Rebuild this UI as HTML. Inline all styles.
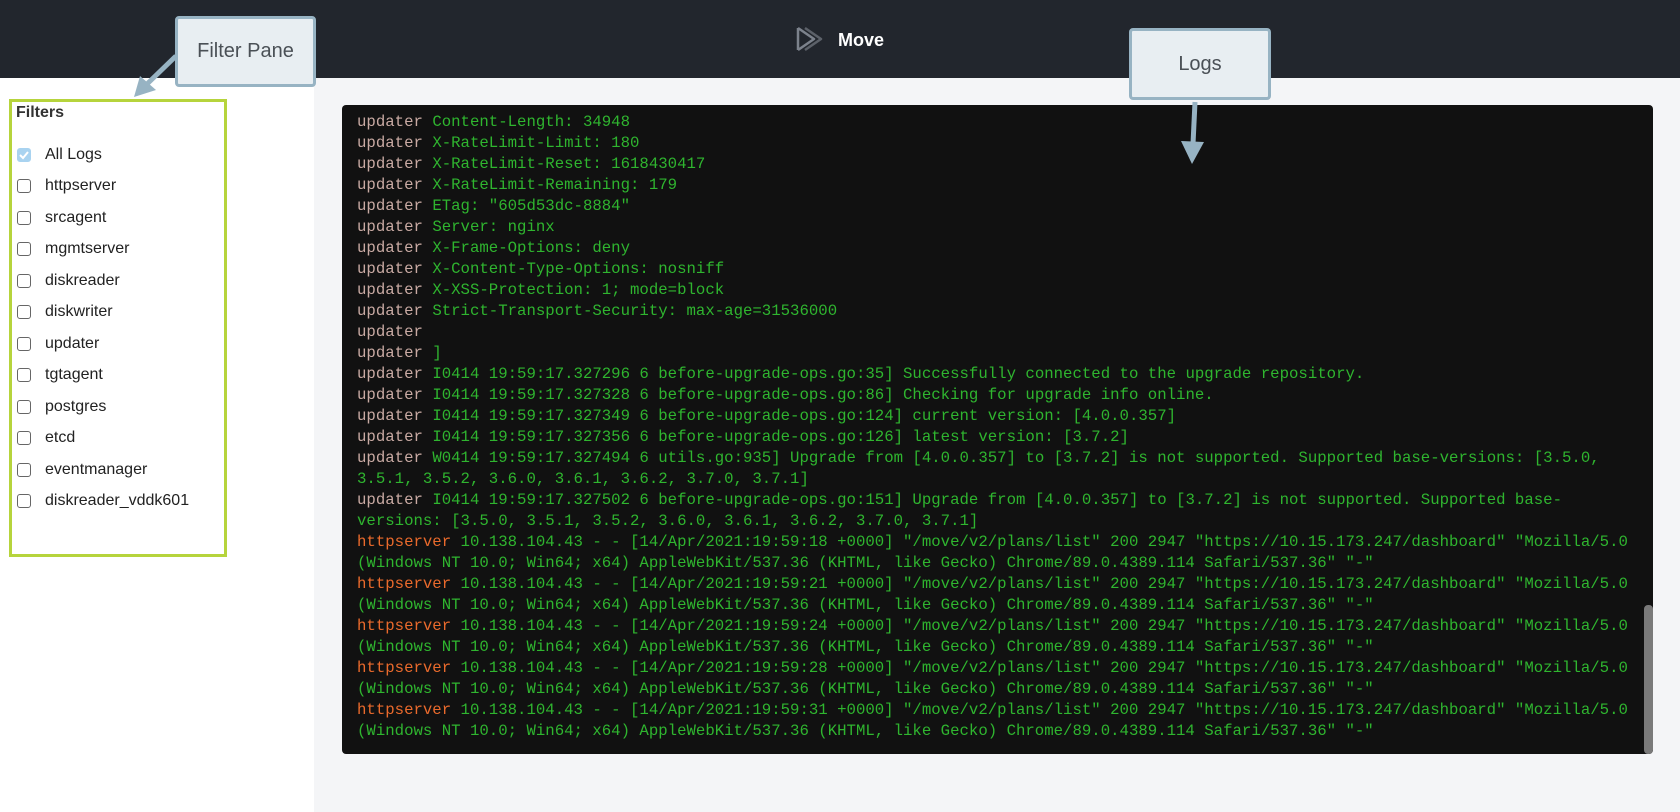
<!DOCTYPE html>
<html><head><meta charset="utf-8"><style>
*{margin:0;padding:0;box-sizing:border-box}
body{width:1680px;height:812px;overflow:hidden;background:#f4f5f7;font-family:"Liberation Sans",sans-serif;position:relative}
.hdr{position:absolute;left:0;top:0;width:1680px;height:78px;background:#22262d}
.left{position:absolute;left:0;top:78px;width:314px;height:734px;background:#fff}
.gbox{position:absolute;left:9px;top:99px;width:218px;height:458px;border:3px solid #b6d43c}
.ft{position:absolute;left:16px;top:104px;font-size:16px;font-weight:bold;color:#333}
.cb{position:absolute;left:17px;width:14px;height:14px;border:1px solid #666;border-radius:3px;background:#fff}
.cl{position:absolute;left:45px;font-size:16px;color:#222}
.log{position:absolute;left:342px;top:105px;width:1311px;height:649px;background:#111;border-radius:4px;overflow:hidden}
.lines{position:absolute;left:15px;top:6.5px;font-family:"Liberation Mono",monospace;font-size:15.7px;line-height:21px;color:#2fb52f;white-space:pre}
.u{color:#c9aaa3}.h{color:#ea6a2c}
.sb{position:absolute;right:0;top:500px;width:9px;height:149px;background:#7a7a7a;border-radius:4px}
.call{position:absolute;background:#e8eef2;border:3px solid #97b3c3;border-radius:4px;color:#4a5056;font-size:20px;display:flex;align-items:center;justify-content:center}
</style></head><body>
<div class="hdr"></div>
<svg style="position:absolute;left:794px;top:24px" width="34" height="30" viewBox="0 0 34 30"><path d="M4 4 V26 M4 4 L20 15 L4 26" fill="none" stroke="#7c828c" stroke-width="2.5" stroke-linejoin="round"/><path d="M11 4 L27 15 L11 26" fill="none" stroke="#5c6169" stroke-width="2.5" stroke-linejoin="round"/></svg>
<div style="position:absolute;left:838px;top:30px;color:#fff;font-weight:bold;font-size:18px">Move</div>
<div class="left"></div>
<div class="gbox"></div>
<div class="ft">Filters</div>
<div class="cb" style="top:148px;background:#a9d3f0;border-color:#a9d3f0"><svg width="12" height="12" style="position:absolute;left:0;top:0"><path d="M2 6 L5 9 L10 3" fill="none" stroke="#fff" stroke-width="2"/></svg></div><div class="cl" style="top:146px">All Logs</div>
<div class="cb" style="top:179px"></div><div class="cl" style="top:177px">httpserver</div>
<div class="cb" style="top:211px"></div><div class="cl" style="top:209px">srcagent</div>
<div class="cb" style="top:242px"></div><div class="cl" style="top:240px">mgmtserver</div>
<div class="cb" style="top:274px"></div><div class="cl" style="top:272px">diskreader</div>
<div class="cb" style="top:305px"></div><div class="cl" style="top:303px">diskwriter</div>
<div class="cb" style="top:337px"></div><div class="cl" style="top:335px">updater</div>
<div class="cb" style="top:368px"></div><div class="cl" style="top:366px">tgtagent</div>
<div class="cb" style="top:400px"></div><div class="cl" style="top:398px">postgres</div>
<div class="cb" style="top:431px"></div><div class="cl" style="top:429px">etcd</div>
<div class="cb" style="top:463px"></div><div class="cl" style="top:461px">eventmanager</div>
<div class="cb" style="top:494px"></div><div class="cl" style="top:492px">diskreader_vddk601</div>
<div class="log"><div class="lines"><span class="u">updater</span> Content-Length: 34948
<span class="u">updater</span> X-RateLimit-Limit: 180
<span class="u">updater</span> X-RateLimit-Reset: 1618430417
<span class="u">updater</span> X-RateLimit-Remaining: 179
<span class="u">updater</span> ETag: "605d53dc-8884"
<span class="u">updater</span> Server: nginx
<span class="u">updater</span> X-Frame-Options: deny
<span class="u">updater</span> X-Content-Type-Options: nosniff
<span class="u">updater</span> X-XSS-Protection: 1; mode=block
<span class="u">updater</span> Strict-Transport-Security: max-age=31536000
<span class="u">updater</span>
<span class="u">updater</span> ]
<span class="u">updater</span> I0414 19:59:17.327296 6 before-upgrade-ops.go:35] Successfully connected to the upgrade repository.
<span class="u">updater</span> I0414 19:59:17.327328 6 before-upgrade-ops.go:86] Checking for upgrade info online.
<span class="u">updater</span> I0414 19:59:17.327349 6 before-upgrade-ops.go:124] current version: [4.0.0.357]
<span class="u">updater</span> I0414 19:59:17.327356 6 before-upgrade-ops.go:126] latest version: [3.7.2]
<span class="u">updater</span> W0414 19:59:17.327494 6 utils.go:935] Upgrade from [4.0.0.357] to [3.7.2] is not supported. Supported base-versions: [3.5.0,
3.5.1, 3.5.2, 3.6.0, 3.6.1, 3.6.2, 3.7.0, 3.7.1]
<span class="u">updater</span> I0414 19:59:17.327502 6 before-upgrade-ops.go:151] Upgrade from [4.0.0.357] to [3.7.2] is not supported. Supported base-
versions: [3.5.0, 3.5.1, 3.5.2, 3.6.0, 3.6.1, 3.6.2, 3.7.0, 3.7.1]
<span class="h">httpserver</span> 10.138.104.43 - - [14/Apr/2021:19:59:18 +0000] "/move/v2/plans/list" 200 2947 "https://10.15.173.247/dashboard" "Mozilla/5.0
(Windows NT 10.0; Win64; x64) AppleWebKit/537.36 (KHTML, like Gecko) Chrome/89.0.4389.114 Safari/537.36" "-"
<span class="h">httpserver</span> 10.138.104.43 - - [14/Apr/2021:19:59:21 +0000] "/move/v2/plans/list" 200 2947 "https://10.15.173.247/dashboard" "Mozilla/5.0
(Windows NT 10.0; Win64; x64) AppleWebKit/537.36 (KHTML, like Gecko) Chrome/89.0.4389.114 Safari/537.36" "-"
<span class="h">httpserver</span> 10.138.104.43 - - [14/Apr/2021:19:59:24 +0000] "/move/v2/plans/list" 200 2947 "https://10.15.173.247/dashboard" "Mozilla/5.0
(Windows NT 10.0; Win64; x64) AppleWebKit/537.36 (KHTML, like Gecko) Chrome/89.0.4389.114 Safari/537.36" "-"
<span class="h">httpserver</span> 10.138.104.43 - - [14/Apr/2021:19:59:28 +0000] "/move/v2/plans/list" 200 2947 "https://10.15.173.247/dashboard" "Mozilla/5.0
(Windows NT 10.0; Win64; x64) AppleWebKit/537.36 (KHTML, like Gecko) Chrome/89.0.4389.114 Safari/537.36" "-"
<span class="h">httpserver</span> 10.138.104.43 - - [14/Apr/2021:19:59:31 +0000] "/move/v2/plans/list" 200 2947 "https://10.15.173.247/dashboard" "Mozilla/5.0
(Windows NT 10.0; Win64; x64) AppleWebKit/537.36 (KHTML, like Gecko) Chrome/89.0.4389.114 Safari/537.36" "-"</div><div class="sb"></div></div>
<div class="call" style="left:175px;top:16px;width:141px;height:71px">Filter Pane</div>
<div class="call" style="left:1129px;top:28px;width:142px;height:72px">Logs</div>
<svg style="position:absolute;left:0;top:0" width="1680" height="812"><g fill="#97b3c3" stroke="#97b3c3"><line x1="176" y1="56" x2="146" y2="85" stroke-width="5"/><polygon points="134,97 140,76 156,90" stroke="none"/><line x1="1195" y1="102" x2="1193" y2="144" stroke-width="5"/><polygon points="1192,164 1181,141 1204,142" stroke="none"/></g></svg>
</body></html>
